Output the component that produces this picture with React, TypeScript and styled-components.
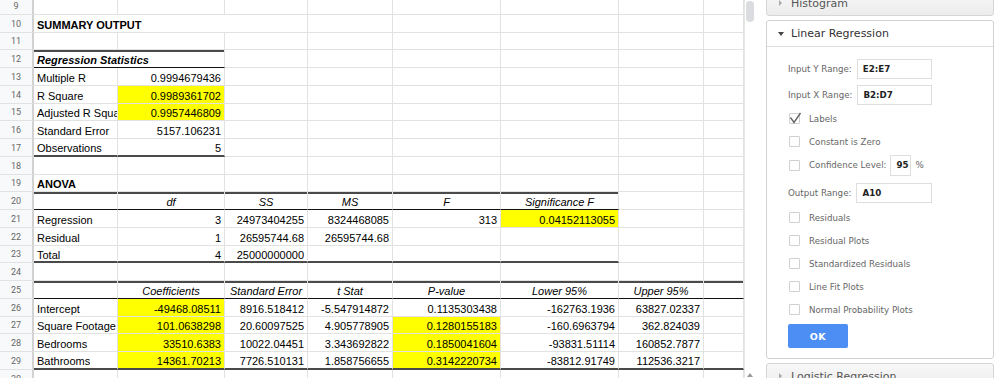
import React from 'react';
import styled, { createGlobalStyle } from 'styled-components';

const GlobalStyle = createGlobalStyle`
  html, body {
    margin: 0;
    padding: 0;
    background: #fff;
  }
  body {
    font-family: "Liberation Sans", Arial, sans-serif;
    overflow: hidden;
  }
`;

const Page = styled.div`
  display: flex;
  width: 1000px;
  height: 378px;
  overflow: hidden;
  background: #fff;
`;

const SheetArea = styled.div`
  width: 744px;
  flex: none;
  overflow: hidden;
`;

const Sheet = styled.div`
  display: grid;
  grid-template-columns: 34px 84px 107px 83px 85px 108px 118px 85px 40px;
  grid-auto-rows: 17.75px;
  margin-top: -3px;
`;

const RowNum = styled.div`
  box-sizing: border-box;
  display: flex;
  align-items: center;
  justify-content: center;
  padding-top: 1px;
  font-family: Roboto, "Liberation Sans", sans-serif;
  font-size: 9px;
  color: #666;
  background: #f8f9fa;
  border-right: 2px solid #d2d2d2;
  border-bottom: 1px solid #e2e2e2;
`;

type Align = 'l' | 'r' | 'c';
type Edge = 'thick' | 'thin' | undefined;

const justify: Record<Align, string> = {
  l: 'flex-start',
  r: 'flex-end',
  c: 'center',
};

const Cell = styled.div<{
  $align: Align;
  $bold?: boolean;
  $italic?: boolean;
  $hl?: boolean;
  $span: number;
  $top?: boolean;
  $bottom: Edge;
}>`
  grid-column: span ${(p) => p.$span};
  box-sizing: border-box;
  display: flex;
  align-items: center;
  justify-content: ${(p) => justify[p.$align]};
  padding: 3px 3px 0;
  font-size: 11px;
  color: #000;
  font-weight: ${(p) => (p.$bold ? 'bold' : 'normal')};
  font-style: ${(p) => (p.$italic ? 'italic' : 'normal')};
  white-space: nowrap;
  overflow: hidden;
  background: ${(p) => (p.$hl ? '#ffff00' : '#fff')};
  border-right: 1px solid #e2e2e2;
  border-bottom: ${(p) =>
    p.$bottom === 'thick'
      ? '2px solid #4a4a4a'
      : p.$bottom === 'thin'
      ? '1px solid #111'
      : '1px solid #e2e2e2'};
  box-shadow: ${(p) => (p.$top ? 'inset 0 2px 0 #4a4a4a' : 'none')};
`;

type C = { v: string; a?: Align; b?: boolean; i?: boolean; hl?: boolean; span?: number } | null;
type Row = { n: number; cells: C[]; top?: number; thin?: number; thick?: number };

const l = (v: string): C => ({ v, a: 'l' });
const r = (v: string, hl?: boolean): C => ({ v, a: 'r', hl });
const h = (v: string): C => ({ v, a: 'c', i: true });

const rows: Row[] = [
  { n: 9, cells: [] },
  { n: 10, cells: [{ v: 'SUMMARY OUTPUT', b: true, span: 3 }] },
  { n: 11, cells: [] },
  { n: 12, cells: [{ v: 'Regression Statistics', b: true, i: true, span: 2 }], top: 2, thin: 2 },
  { n: 13, cells: [l('Multiple R'), r('0.9994679436')] },
  { n: 14, cells: [l('R Square'), r('0.9989361702', true)] },
  { n: 15, cells: [l('Adjusted R Square'), r('0.9957446809', true)] },
  { n: 16, cells: [l('Standard Error'), r('5157.106231')] },
  { n: 17, cells: [l('Observations'), r('5')], thick: 2 },
  { n: 18, cells: [] },
  { n: 19, cells: [{ v: 'ANOVA', b: true }] },
  {
    n: 20,
    cells: [null, h('df'), h('SS'), h('MS'), h('F'), h('Significance F')],
    top: 6,
    thin: 6,
  },
  {
    n: 21,
    cells: [l('Regression'), r('3'), r('24973404255'), r('8324468085'), r('313'), r('0.04152113055', true)],
  },
  { n: 22, cells: [l('Residual'), r('1'), r('26595744.68'), r('26595744.68')] },
  { n: 23, cells: [l('Total'), r('4'), r('25000000000')], thick: 6 },
  { n: 24, cells: [] },
  {
    n: 25,
    cells: [null, h('Coefficients'), h('Standard Error'), h('t Stat'), h('P-value'), h('Lower 95%'), h('Upper 95%')],
    top: 8,
    thin: 8,
  },
  {
    n: 26,
    cells: [l('Intercept'), r('-49468.08511', true), r('8916.518412'), r('-5.547914872'), r('0.1135303438'), r('-162763.1936'), r('63827.02337')],
  },
  {
    n: 27,
    cells: [l('Square Footage'), r('101.0638298', true), r('20.60097525'), r('4.905778905'), r('0.1280155183', true), r('-160.6963794'), r('362.824039')],
  },
  {
    n: 28,
    cells: [l('Bedrooms'), r('33510.6383', true), r('10022.04451'), r('3.343692822'), r('0.1850041604', true), r('-93831.51114'), r('160852.7877')],
  },
  {
    n: 29,
    cells: [l('Bathrooms'), r('14361.70213', true), r('7726.510131'), r('1.858756655'), r('0.3142220734', true), r('-83812.91749'), r('112536.3217')],
    thick: 8,
  },
  { n: 30, cells: [] },
];

const SheetRow = ({ row }: { row: Row }) => {
  const out: React.ReactNode[] = [<RowNum key="n">{row.n}</RowNum>];
  let col = 0;
  while (col < 8) {
    const c = row.cells[col] || null;
    const span = c?.span || 1;
    const bottom: Edge =
      row.thick && col < row.thick ? 'thick' : row.thin && col < row.thin ? 'thin' : undefined;
    out.push(
      <Cell
        key={col}
        $align={c?.a || 'l'}
        $bold={c?.b}
        $italic={c?.i}
        $hl={c?.hl}
        $span={span}
        $top={!!row.top && col < row.top}
        $bottom={bottom}
      >
        {c?.v}
      </Cell>
    );
    col += span;
  }
  return <>{out}</>;
};

const VScroll = styled.div`
  width: 14px;
  flex: none;
  box-sizing: border-box;
  border-left: 1px solid #e6e6e6;
  padding-left: 1px;
  display: flex;
  flex-direction: column;
  justify-content: space-between;
  align-items: flex-start;
`;

const Thumb = styled.div`
  width: 8px;
  height: 21px;
  margin-top: 1px;
  border-radius: 4px;
  background: #dadce0;
`;

const ScrollArrow = styled.svg`
  margin: 0 0 1px 1px;
`;

const Panel = styled.div`
  width: 228px;
  flex: none;
  margin-left: 8px;
  margin-top: -10px;
  display: flex;
  flex-direction: column;
  gap: 4px;
  font-family: "DejaVu Sans", Verdana, sans-serif;
`;

const Collapsed = styled.div`
  box-sizing: border-box;
  height: 26px;
  flex: none;
  display: flex;
  align-items: center;
  gap: 7px;
  padding-left: 11px;
  border: 1px solid #d6d6d6;
  border-radius: 3px;
  background: linear-gradient(#f8f8f8, #ececec);
  font-size: 11px;
  color: #555;
`;

const Card = styled.div`
  flex: none;
  border: 1px solid #d2d2d2;
  border-radius: 3px;
  background: #fff;
`;

const CardHeader = styled.div`
  box-sizing: border-box;
  height: 26px;
  display: flex;
  align-items: center;
  gap: 7px;
  padding-left: 11px;
  border-bottom: 1px solid #dcdcdc;
  font-size: 11px;
  color: #333;
`;

const CardBody = styled.div`
  display: flex;
  flex-direction: column;
  padding: 12px 0 10px 21px;
  font-size: 8.7px;
  color: #666;
`;

const FieldRow = styled.div<{ $mt?: number }>`
  display: flex;
  align-items: center;
  gap: 5px;
  height: 20px;
  margin-top: ${(p) => p.$mt || 0}px;
`;

const Field = styled.div<{ $w: number; $h?: number }>`
  box-sizing: border-box;
  width: ${(p) => p.$w}px;
  height: ${(p) => p.$h || 20}px;
  display: flex;
  align-items: center;
  padding-left: 5px;
  border: 1px solid #dedede;
  font-weight: bold;
  color: #222;
`;

const CheckRow = styled.div<{ $mt?: number; $h?: number }>`
  display: flex;
  align-items: center;
  gap: 9px;
  height: ${(p) => p.$h || 23}px;
  margin-top: ${(p) => p.$mt || 0}px;
  padding-left: 1px;
`;

const Box = styled.div`
  box-sizing: border-box;
  width: 11px;
  height: 11px;
  flex: none;
  border: 1px solid #d0d0d0;
  border-radius: 1px;
  background: #fff;
  display: flex;
`;

const Inline = styled.div`
  display: flex;
  align-items: center;
  gap: 4px;
`;

const OkButton = styled.div`
  width: 60px;
  height: 24px;
  margin-top: 3px;
  display: flex;
  align-items: center;
  justify-content: center;
  border-radius: 2px;
  background: #4d8ef5;
  color: #fff;
  font-weight: bold;
  font-size: 9.5px;
  letter-spacing: 0.5px;
`;

const Caret = ({ open }: { open?: boolean }) =>
  open ? (
    <svg width="6" height="4" viewBox="0 0 6 4">
      <path d="M0 0 L6 0 L3 4 Z" fill="#444" />
    </svg>
  ) : (
    <svg width="6" height="6" viewBox="0 0 6 6">
      <path d="M1 0 L4 3 L1 6 Z" fill="#aaa" />
    </svg>
  );

const Check = ({ checked, label, mt }: { checked?: boolean; label: string; mt?: number }) => (
  <CheckRow $mt={mt}>
    <Box>
      {checked && (
        <svg width="11" height="11" viewBox="0 0 11 11" style={{ overflow: 'visible' }}>
          <polyline points="0.5,3.5 4,8.5 10.5,-1" fill="none" stroke="#666" strokeWidth="1.4" />
        </svg>
      )}
    </Box>
    {label}
  </CheckRow>
);

export default function App() {
  return (
    <Page>
      <GlobalStyle />
      <SheetArea>
        <Sheet>
          {rows.map((row) => (
            <SheetRow key={row.n} row={row} />
          ))}
        </Sheet>
      </SheetArea>
      <VScroll>
        <Thumb />
        <ScrollArrow width="6" height="4" viewBox="0 0 6 4">
          <path d="M0 4 L3 0 L6 4 Z" fill="#999" />
        </ScrollArrow>
      </VScroll>
      <Panel>
        <Collapsed>
          <Caret />
          Histogram
        </Collapsed>
        <Card>
          <CardHeader>
            <Caret open />
            Linear Regression
          </CardHeader>
          <CardBody>
            <FieldRow>
              Input Y Range:
              <Field $w={75}>E2:E7</Field>
            </FieldRow>
            <FieldRow $mt={6}>
              Input X Range:
              <Field $w={75}>B2:D7</Field>
            </FieldRow>
            <Check checked label="Labels" mt={2} />
            <Check label="Constant is Zero" />
            <CheckRow $h={24}>
              <Box />
              <Inline>
                Confidence Level:
                <Field $w={21} $h={21}>95</Field>
                %
              </Inline>
            </CheckRow>
            <FieldRow $mt={6}>
              Output Range:
              <Field $w={76}>A10</Field>
            </FieldRow>
            <Check label="Residuals" mt={3} />
            <Check label="Residual Plots" />
            <Check label="Standardized Residuals" />
            <Check label="Line Fit Plots" />
            <Check label="Normal Probability Plots" />
            <OkButton>OK</OkButton>
          </CardBody>
        </Card>
        <Collapsed>
          <Caret />
          Logistic Regression
        </Collapsed>
      </Panel>
    </Page>
  );
}
